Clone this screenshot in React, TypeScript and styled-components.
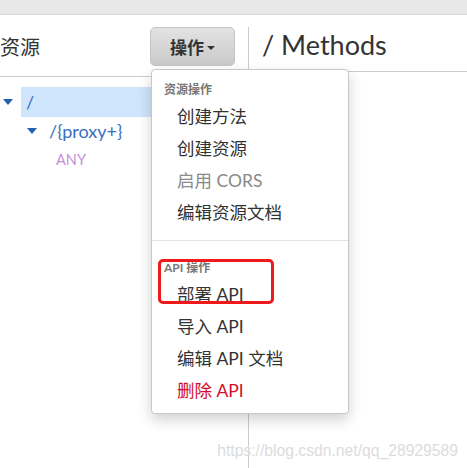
import React from 'react';
import styled, { createGlobalStyle } from 'styled-components';

const GlobalStyle = createGlobalStyle`
  html, body {
    margin: 0;
    padding: 0;
    background: #ffffff;
    font-family: Lato, "Noto Sans CJK SC", sans-serif;
    overflow: hidden;
  }
`;

const Page = styled.div`
  width: 467px;
  height: 468px;
  position: relative;
  overflow: hidden;
  display: flex;
  flex-direction: column;
`;

const TopBar = styled.div`
  height: 14px;
  flex-shrink: 0;
  background: #e8e8e8;
  border-bottom: 1px solid #d6d6d6;
`;

const Main = styled.div`
  flex: 1;
  display: flex;
`;

const LeftPanel = styled.div`
  width: 248px;
  flex-shrink: 0;
  display: flex;
  flex-direction: column;
`;

const LeftHeader = styled.div`
  height: 61px;
  display: flex;
  align-items: center;
  justify-content: space-between;
  padding-right: 13px;
  border-bottom: 1px solid #cccccc;
`;

const PanelTitle = styled.div`
  font-size: 20px;
  color: #333333;
  padding-top: 2px;
`;

const ButtonWrap = styled.div`
  position: relative;
  align-self: flex-start;
  margin-top: 12px;
`;

const ActionButton = styled.button`
  width: 85px;
  height: 39px;
  border: 1px solid #c4c4c4;
  border-radius: 5px;
  background: linear-gradient(#e3e3e3, #c9c9c9);
  font-family: Lato, "Noto Sans CJK SC", sans-serif;
  font-size: 17px;
  font-weight: 700;
  color: #333333;
  display: flex;
  align-items: center;
  justify-content: center;
  gap: 3px;
  padding: 0;
`;

const Caret = styled.span`
  width: 0;
  height: 0;
  border-left: 4px solid transparent;
  border-right: 4px solid transparent;
  border-top: 4px solid #333333;
  margin-top: 2px;
`;

const Tree = styled.div`
  padding-top: 10px;
  display: flex;
  flex-direction: column;
`;

const TreeRow = styled.div<{ $indent: number; $tall?: boolean }>`
  height: ${({ $tall }) => ($tall ? 30 : 28)}px;
  display: flex;
  align-items: center;
  padding-left: ${({ $indent }) => $indent}px;
`;

const Toggle = styled.span`
  width: 0;
  height: 0;
  border-left: 5px solid transparent;
  border-right: 5px solid transparent;
  border-top: 6px solid #2161b0;
  margin-right: 12px;
`;

const SelectedBar = styled.div`
  flex: 1;
  align-self: stretch;
  display: flex;
  align-items: center;
  margin-left: -4px;
  padding-left: 5px;
  background: #cfe5fc;
`;

const PathText = styled.span`
  font-size: 18px;
  color: #3a6fc0;
`;

const MethodText = styled.span`
  font-size: 14.5px;
  color: #c68fda;
`;

const RightPanel = styled.div`
  flex: 1;
  margin-top: 12px;
  border-left: 1px solid #cccccc;
  display: flex;
  flex-direction: column;
`;

const RightHeader = styled.div`
  height: 45px;
  border-bottom: 1px solid #cccccc;
  display: flex;
  align-items: center;
  padding-left: 13px;
  padding-bottom: 9px;
  box-sizing: border-box;
  font-size: 27px;
  color: #333333;
`;

const Menu = styled.div`
  position: absolute;
  top: 42px;
  left: 1px;
  width: 196px;
  padding: 9px 0 6px;
  background: #ffffff;
  border: 1px solid #c8c8c8;
  border-radius: 4px;
  box-shadow: 0 6px 14px rgba(0, 0, 0, 0.18);
  z-index: 10;
`;

const MenuHeader = styled.div`
  height: 22px;
  line-height: 22px;
  padding-left: 12px;
  font-size: 12px;
  font-weight: 700;
  color: #777777;
`;

const MenuItem = styled.div<{ $tone?: 'disabled' | 'danger' }>`
  height: 32px;
  line-height: 32px;
  padding-left: 25px;
  font-size: 17.5px;
  white-space: nowrap;
  color: ${({ $tone }) =>
    $tone === 'disabled' ? '#8a8a8a' : $tone === 'danger' ? '#d10f2a' : '#333333'};
`;

const Divider = styled.div`
  height: 1px;
  background: #e2e2e2;
  margin: 11px 0 16px;
`;

const Highlight = styled.div`
  position: absolute;
  left: 6px;
  top: 189px;
  width: 110px;
  height: 39px;
  border: 3px solid #f01818;
  border-radius: 5px;
  pointer-events: none;
`;

const Watermark = styled.div`
  position: absolute;
  right: 9px;
  bottom: 8px;
  font-family: "Liberation Sans", Arial, sans-serif;
  font-size: 15.7px;
  color: #dcdcdc;
  text-shadow: 0 0 1px #ffffff;
`;

const resourceActions = [
  { label: '创建方法' },
  { label: '创建资源' },
  { label: '启用 CORS', tone: 'disabled' as const },
  { label: '编辑资源文档' },
];

const apiActions = [
  { label: '部署 API' },
  { label: '导入 API' },
  { label: '编辑 API 文档' },
  { label: '删除 API', tone: 'danger' as const },
];

function App(): JSX.Element {
  return (
    <Page>
      <GlobalStyle />
      <TopBar />
      <Main>
        <LeftPanel>
          <LeftHeader>
            <PanelTitle>资源</PanelTitle>
            <ButtonWrap>
              <ActionButton>
                操作
                <Caret />
              </ActionButton>
              <Menu>
                <MenuHeader>资源操作</MenuHeader>
                {resourceActions.map((item) => (
                  <MenuItem key={item.label} $tone={item.tone}>
                    {item.label}
                  </MenuItem>
                ))}
                <Divider />
                <MenuHeader>API 操作</MenuHeader>
                {apiActions.map((item) => (
                  <MenuItem key={item.label} $tone={item.tone}>
                    {item.label}
                  </MenuItem>
                ))}
                <Highlight />
              </Menu>
            </ButtonWrap>
          </LeftHeader>
          <Tree>
            <TreeRow $indent={3} $tall>
              <Toggle />
              <SelectedBar>
                <PathText>/</PathText>
              </SelectedBar>
            </TreeRow>
            <TreeRow $indent={27}>
              <Toggle />
              <PathText>/{'{proxy+}'}</PathText>
            </TreeRow>
            <TreeRow $indent={56}>
              <MethodText>ANY</MethodText>
            </TreeRow>
          </Tree>
        </LeftPanel>
        <RightPanel>
          <RightHeader>/ Methods</RightHeader>
        </RightPanel>
      </Main>
      <Watermark>https://blog.csdn.net/qq_28929589</Watermark>
    </Page>
  );
}

export default App;
